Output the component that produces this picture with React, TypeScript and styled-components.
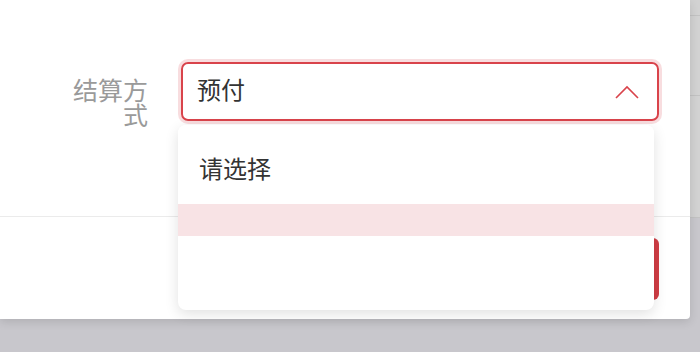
import React from 'react';
import styled, { createGlobalStyle } from 'styled-components';

const GlobalStyle = createGlobalStyle`
  html, body {
    margin: 0;
    padding: 0;
    background: #c8c7cc;
    font-family: "Noto Sans CJK SC", "Noto Sans", sans-serif;
    overflow: hidden;
  }
`;

const Screen = styled.div`
  display: flex;
  width: 700px;
  height: 352px;
  align-items: flex-start;
`;

const Modal = styled.div`
  position: relative;
  width: 690px;
  height: 319px;
  background: #fff;
  border-bottom-right-radius: 4px;
  box-shadow: 0 3px 10px rgba(0, 0, 0, 0.12);
  display: flex;
  flex-direction: column;
  z-index: 1;
`;

const Body = styled.div`
  padding: 62px 31px 0 72px;
  height: 216px;
  box-sizing: border-box;
`;

const FormRow = styled.div`
  display: flex;
  align-items: flex-start;
  gap: 33px;
`;

const Label = styled.label`
  width: 76px;
  padding-top: 15px;
  text-align: right;
  font-size: 25px;
  line-height: 25px;
  color: #9a9a9a;
`;

const SelectWrap = styled.div`
  position: relative;
  flex: 1;
`;

const SelectBox = styled.div`
  display: flex;
  align-items: center;
  justify-content: space-between;
  height: 59px;
  box-sizing: border-box;
  padding: 0 18px 0 14px;
  border: 2px solid #d9434b;
  border-radius: 7px;
  box-shadow: 0 0 0 3px rgba(217, 67, 75, 0.18);
  font-size: 24px;
  color: #333;
`;

const Value = styled.span`
  margin-bottom: 7px;
`;

const Dropdown = styled.ul`
  position: absolute;
  top: 63px;
  left: -3px;
  width: 476px;
  height: 185px;
  margin: 0;
  padding: 0;
  list-style: none;
  background: #fff;
  border-radius: 8px;
  box-shadow: 0 4px 14px rgba(0, 0, 0, 0.12);
  overflow: hidden;
  z-index: 5;
`;

const Option = styled.li<{ $active?: boolean; $tall?: boolean }>`
  box-sizing: border-box;
  height: ${p => (p.$tall ? '79px' : '32px')};
  padding: ${p => (p.$tall ? '31px 21px 0' : '0 21px')};
  font-size: 24px;
  line-height: 24px;
  color: #333;
  background: ${p => (p.$active ? '#f8e3e5' : '#fff')};
`;

const Footer = styled.div`
  border-top: 1px solid #ebebeb;
  display: flex;
  justify-content: flex-end;
  padding: 21px 31px 0;
`;

const PrimaryButton = styled.button`
  width: 220px;
  height: 62px;
  border: none;
  border-radius: 6px;
  background: #d13d45;
  color: #fff;
  font-size: 22px;
`;

const SideStrip = styled.div`
  width: 10px;
  display: flex;
  flex-direction: column;
`;

const SideField = styled.div<{ $h: number }>`
  height: ${p => p.$h}px;
  background: #d2d2d2;
  border-bottom: 1px solid #c2c2c2;
`;

const Chevron = () => (
  <svg width="24" height="14" viewBox="0 0 24 14" fill="none">
    <polyline points="1,13 12,2 23,13" stroke="#d9434b" strokeWidth="1.6" />
  </svg>
);

export default function App() {
  return (
    <>
      <GlobalStyle />
      <Screen>
        <Modal>
          <Body>
            <FormRow>
              <Label>结算方式</Label>
              <SelectWrap>
                <SelectBox>
                  <Value>预付</Value>
                  <Chevron />
                </SelectBox>
                <Dropdown>
                  <Option $tall>请选择</Option>
                  <Option $active />
                  <Option />
                </Dropdown>
              </SelectWrap>
            </FormRow>
          </Body>
          <Footer>
            <PrimaryButton />
          </Footer>
        </Modal>
        <SideStrip>
          <SideField $h={15} />
          <SideField $h={79} />
          <SideField $h={121} />
        </SideStrip>
      </Screen>
    </>
  );
}
